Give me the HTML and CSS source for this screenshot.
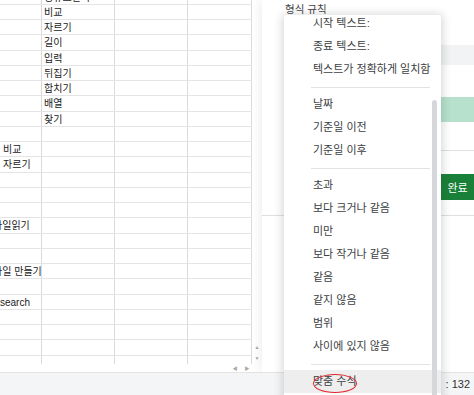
FILE: index.html
```html
<!DOCTYPE html>
<html lang="ko">
<head>
    <meta charset="UTF-8">
    <title>형식 규칙</title>
    <link rel="stylesheet" href="styles.css">
</head>
<body>
    <div class="app">
        <div class="main">
            <div class="sheet">
                <div class="sheet-body">
                    <div class="grid">
                        <div class="row"><div class="cell c-a"></div><div class="cell c-b">정규표현식</div><div class="cell c-c"></div><div class="cell c-d"></div></div>
                        <div class="row"><div class="cell c-a"></div><div class="cell c-b">비교</div><div class="cell c-c"></div><div class="cell c-d"></div></div>
                        <div class="row"><div class="cell c-a"></div><div class="cell c-b">자르기</div><div class="cell c-c"></div><div class="cell c-d"></div></div>
                        <div class="row"><div class="cell c-a"></div><div class="cell c-b">길이</div><div class="cell c-c"></div><div class="cell c-d"></div></div>
                        <div class="row"><div class="cell c-a"></div><div class="cell c-b">입력</div><div class="cell c-c"></div><div class="cell c-d"></div></div>
                        <div class="row"><div class="cell c-a"></div><div class="cell c-b">뒤집기</div><div class="cell c-c"></div><div class="cell c-d"></div></div>
                        <div class="row"><div class="cell c-a"></div><div class="cell c-b">합치기</div><div class="cell c-c"></div><div class="cell c-d"></div></div>
                        <div class="row"><div class="cell c-a"></div><div class="cell c-b">배열</div><div class="cell c-c"></div><div class="cell c-d"></div></div>
                        <div class="row"><div class="cell c-a"></div><div class="cell c-b">찾기</div><div class="cell c-c"></div><div class="cell c-d"></div></div>
                        <div class="row"><div class="cell c-a"></div><div class="cell c-b"></div><div class="cell c-c"></div><div class="cell c-d"></div></div>
                        <div class="row"><div class="cell c-a">비교</div><div class="cell c-b"></div><div class="cell c-c"></div><div class="cell c-d"></div></div>
                        <div class="row"><div class="cell c-a">자르기</div><div class="cell c-b"></div><div class="cell c-c"></div><div class="cell c-d"></div></div>
                        <div class="row"><div class="cell c-a"></div><div class="cell c-b"></div><div class="cell c-c"></div><div class="cell c-d"></div></div>
                        <div class="row"><div class="cell c-a"></div><div class="cell c-b"></div><div class="cell c-c"></div><div class="cell c-d"></div></div>
                        <div class="row"><div class="cell c-a"></div><div class="cell c-b"></div><div class="cell c-c"></div><div class="cell c-d"></div></div>
                        <div class="row"><div class="cell c-a cut">파일읽기</div><div class="cell c-b"></div><div class="cell c-c"></div><div class="cell c-d"></div></div>
                        <div class="row"><div class="cell c-a"></div><div class="cell c-b"></div><div class="cell c-c"></div><div class="cell c-d"></div></div>
                        <div class="row"><div class="cell c-a"></div><div class="cell c-b"></div><div class="cell c-c"></div><div class="cell c-d"></div></div>
                        <div class="row"><div class="cell c-a cut">파일 만들기</div><div class="cell c-b"></div><div class="cell c-c"></div><div class="cell c-d"></div></div>
                        <div class="row"><div class="cell c-a"></div><div class="cell c-b"></div><div class="cell c-c"></div><div class="cell c-d"></div></div>
                        <div class="row"><div class="cell c-a flush">search</div><div class="cell c-b"></div><div class="cell c-c"></div><div class="cell c-d"></div></div>
                        <div class="row"><div class="cell c-a"></div><div class="cell c-b"></div><div class="cell c-c"></div><div class="cell c-d"></div></div>
                        <div class="row"><div class="cell c-a"></div><div class="cell c-b"></div><div class="cell c-c"></div><div class="cell c-d"></div></div>
                        <div class="row"><div class="cell c-a"></div><div class="cell c-b"></div><div class="cell c-c"></div><div class="cell c-d"></div></div>
                        <div class="row"><div class="cell c-a"></div><div class="cell c-b"></div><div class="cell c-c"></div><div class="cell c-d"></div></div>
                    </div>
                    <div class="vscroll">
                        <span class="arrow">&#9650;</span>
                        <span class="arrow">&#9660;</span>
                    </div>
                </div>
                <div class="hscroll">
                    <span class="arrow">&#9664;</span>
                    <span class="arrow">&#9654;</span>
                </div>
            </div>

            <div class="panel">
                <div class="panel-title">형식 규칙</div>
                <div class="field"><span class="caret"></span></div>
                <div class="preview"></div>
                <div class="rule-line"></div>
                <div class="actions"><button class="done">완료</button></div>
                <div class="panel-line"></div>
            </div>
        </div>

        <div class="status"><span class="sum">: 132</span></div>

        <div class="menu">
            <div class="menu-list">
                <div class="item">시작 텍스트:</div>
                <div class="item">종료 텍스트:</div>
                <div class="item">텍스트가 정확하게 일치함</div>
                <div class="sep"></div>
                <div class="item">날짜</div>
                <div class="item">기준일 이전</div>
                <div class="item">기준일 이후</div>
                <div class="sep"></div>
                <div class="item">초과</div>
                <div class="item">보다 크거나 같음</div>
                <div class="item">미만</div>
                <div class="item">보다 작거나 같음</div>
                <div class="item">같음</div>
                <div class="item">같지 않음</div>
                <div class="item">범위</div>
                <div class="item">사이에 있지 않음</div>
                <div class="sep"></div>
                <div class="item active">맞춤 수식</div>
            </div>
            <div class="menu-thumb"></div>
        </div>

        <div class="mark"></div>
    </div>
</body>
</html>
```

FILE: styles.css
```css
* {
    box-sizing: border-box;
    margin: 0;
    padding: 0;
}

body {
    font-family: "Liberation Sans", "Noto Sans CJK KR", sans-serif;
    font-size: 10px;
    color: #222;
    background: #fff;
    overflow: hidden;
}

.app {
    position: relative;
    width: 474px;
    height: 395px;
    display: flex;
    flex-direction: column;
    overflow: hidden;
}

.main {
    display: flex;
    height: 372px;
}

/* spreadsheet */
.sheet {
    width: 262px;
    display: flex;
    flex-direction: column;
}

.sheet-body {
    display: flex;
    height: 364px;
    overflow: hidden;
}

.grid {
    width: 252px;
    margin-top: -10.3px;
}

.row {
    display: flex;
    height: 15.26px;
    border-bottom: 1px solid #e4e4e4;
}

.cell {
    border-right: 1px solid #dadada;
    padding: 1px 2px 0;
    white-space: nowrap;
    overflow: hidden;
    line-height: 14px;
}

.c-a { width: 42px; padding-left: 3px; }
.c-b { width: 73px; }
.c-c { width: 73px; }
.c-d { width: 64px; }

.cut {
    padding-left: 0;
    text-indent: -7px;
}

.flush {
    padding-left: 0;
}

.vscroll {
    width: 10px;
    display: flex;
    flex-direction: column;
    justify-content: flex-end;
    align-items: center;
}

.vscroll .arrow {
    height: 11px;
    font-size: 5px;
    line-height: 11px;
    color: #a8a8a8;
}

.hscroll {
    height: 8px;
    display: flex;
    justify-content: flex-end;
    padding-right: 9px;
}

.hscroll .arrow {
    width: 12px;
    text-align: center;
    font-size: 5px;
    line-height: 8px;
    color: #a8a8a8;
}

/* side panel */
.panel {
    flex: 1;
    background: #fff;
    box-shadow: -2px 0 10px rgba(0, 0, 0, 0.07);
    z-index: 1;
}

.panel-title {
    height: 18px;
    line-height: 18px;
    padding-left: 23px;
    font-size: 10.5px;
    color: #444;
}

.field {
    margin: 27px 0 0 23px;
    height: 20px;
    background: #f1f3f4;
    position: relative;
}

.caret {
    position: absolute;
    right: 0;
    top: 10px;
    width: 3px;
    height: 1px;
    background: #666;
}

.preview {
    margin: 32px 0 0 23px;
    height: 25px;
    background: #b7e1cd;
}

.rule-line {
    margin: 28px 0 0 23px;
    border-top: 1px solid #e0e0e0;
}

.actions {
    margin-top: 23px;
    display: flex;
}

.done {
    margin-left: 168px;
    width: 55px;
    height: 26px;
    border: none;
    border-radius: 3px;
    background: #188038;
    color: #fff;
    font-family: "Liberation Sans", "Noto Sans CJK KR", sans-serif;
    font-size: 11px;
}

.panel-line {
    margin-top: 15px;
    border-top: 1px solid #e0e0e0;
}

/* status bar */
.status {
    height: 23px;
    background: #f4f5f6;
    border-top: 1px solid #e3e3e3;
    display: flex;
    justify-content: flex-end;
    align-items: center;
    padding-right: 4px;
    z-index: 1;
}

.sum {
    font-size: 11px;
    color: #333;
}

/* dropdown menu */
.menu {
    position: absolute;
    left: 284px;
    top: 15px;
    width: 157px;
    height: 400px;
    background: #fff;
    border-radius: 3px;
    box-shadow: 0 1px 8px 2px rgba(60, 64, 67, 0.2);
    overflow: hidden;
    z-index: 2;
}

.menu-list {
    margin-top: -3.5px;
}

.item {
    height: 23px;
    line-height: 23px;
    padding-left: 29px;
    font-size: 11px;
    color: #3c4043;
    white-space: nowrap;
}

.item.active {
    background: #eeeeee;
}

.sep {
    height: 12px;
    margin: 0 11px 0 27px;
    position: relative;
}

.sep::after {
    content: "";
    position: absolute;
    left: 0;
    right: 0;
    top: 6px;
    border-top: 1px solid #e2e2e2;
}

.menu-thumb {
    position: absolute;
    right: 4px;
    top: 85px;
    width: 5px;
    height: 320px;
    border-radius: 3px;
    background: #d6d7da;
}

/* red annotation ring */
.mark {
    position: absolute;
    left: 313px;
    top: 374px;
    width: 44px;
    height: 19px;
    border: 1.5px solid #e0262c;
    border-radius: 50%;
    z-index: 3;
}
```
